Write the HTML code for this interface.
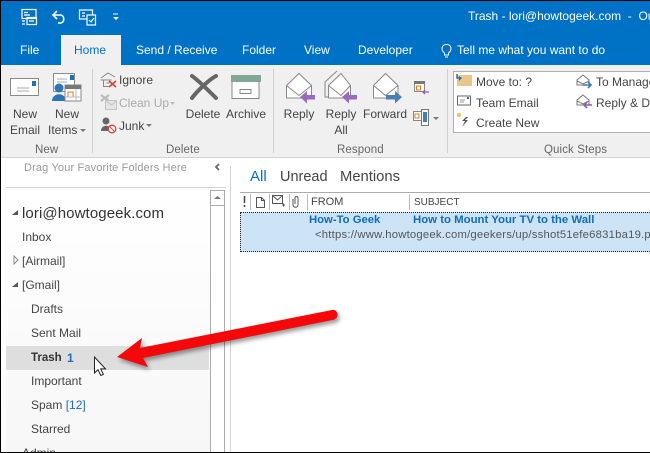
<!DOCTYPE html>
<html><head><meta charset="utf-8"><style>
html,body{margin:0;padding:0;background:#fff}
#p{position:relative;width:650px;height:453px;overflow:hidden;background:#fff;font-family:"Liberation Sans",sans-serif;color:#444}
.t{position:absolute;white-space:nowrap;line-height:16px;font-size:12px}
.w{color:#fff}.g{color:#666;font-size:11.5px;letter-spacing:.1px}.c{text-align:center;transform:translateX(-50%)}
.b{position:absolute}
svg{position:absolute;left:0;top:0}
</style></head><body><div id="p">
<div class="b" style="left:0;top:0;width:650px;height:65px;background:#0072c6"></div>
<div class="b" style="left:0;top:65px;width:650px;height:92px;background:#f0f0f0"></div>
<div class="b" style="left:0;top:157px;width:650px;height:1px;background:#d4d4d4"></div>
<div class="b" style="left:61px;top:35px;width:60px;height:30px;background:#f0f0f0"></div>
<div class="t w" style="left:468px;top:8px;">Trash - lori@howtogeek.com&nbsp; -&nbsp; Ou</div>
<div class="t w" style="left:20px;top:42px">File</div>
<div class="t" style="left:74px;top:42px;color:#0072c6">Home</div>
<div class="t w" style="left:136px;top:42px">Send / Receive</div>
<div class="t w" style="left:242px;top:42px">Folder</div>
<div class="t w" style="left:304px;top:42px">View</div>
<div class="t w" style="left:358px;top:42px">Developer</div>
<div class="t w" style="left:457px;top:42px">Tell me what you want to do</div>

<div class="t c" style="left:25px;top:106px">New</div><div class="t c" style="left:25px;top:122px">Email</div>
<div class="t c" style="left:67px;top:106px">New</div><div class="t" style="left:48px;top:122px">Items</div>
<div class="t g" style="left:35px;top:142px">New</div>
<div class="t" style="left:119px;top:72px">Ignore</div>
<div class="t" style="left:119px;top:95px;color:#aaa">Clean Up</div>
<div class="t" style="left:119px;top:118px">Junk</div>
<div class="t c" style="left:203px;top:106px">Delete</div>
<div class="t c" style="left:246px;top:106px">Archive</div>
<div class="t g" style="left:166px;top:142px">Delete</div>
<div class="t c" style="left:299px;top:106px">Reply</div>
<div class="t c" style="left:341px;top:106px">Reply</div><div class="t c" style="left:341px;top:122px">All</div>
<div class="t c" style="left:385px;top:106px">Forward</div>
<div class="t g" style="left:337px;top:142px">Respond</div>
<div class="t g" style="left:544px;top:142px">Quick Steps</div>

<div class="b" style="left:453px;top:71px;width:197px;height:62px;background:#fff;border:1px solid #b0b0b0;box-sizing:border-box;border-right:0"></div>
<div class="t" style="left:476px;top:74px">Move to: ?</div>
<div class="t" style="left:476px;top:95px">Team Email</div>
<div class="t" style="left:476px;top:115px">Create New</div>
<div class="t" style="left:596px;top:74px">To Manager</div>
<div class="t" style="left:596px;top:95px">Reply &amp; Delete</div>

<!-- sidebar -->
<div class="t" style="left:24px;top:160px;color:#999;font-size:11px;letter-spacing:.15px">Drag Your Favorite Folders Here</div>
<div class="b" style="left:6px;top:187px;width:220px;height:1px;background:#d4d4d4"></div>
<div class="b" style="left:6px;top:188px;width:204px;height:265px;background:linear-gradient(#fff,#f7f7f7)"></div>
<div class="b" style="left:210px;top:190px;width:1px;height:263px;background:#ababab"></div>
<div class="b" style="left:224px;top:190px;width:1px;height:263px;background:#ababab"></div>
<div class="b" style="left:211px;top:190px;width:13px;height:1px;background:#ababab"></div>
<div class="b" style="left:211px;top:205px;width:13px;height:1px;background:#ababab"></div>
<div class="b" style="left:230px;top:166px;width:1px;height:287px;background:#d4d4d4"></div>
<div class="t" style="left:22px;top:206px;font-size:15px;color:#333;letter-spacing:.1px">lori@howtogeek.com</div>
<div class="t" style="left:22px;top:229px">Inbox</div>
<div class="t" style="left:22px;top:253px">[Airmail]</div>
<div class="t" style="left:22px;top:277px">[Gmail]</div>
<div class="t" style="left:31px;top:301px">Drafts</div>
<div class="t" style="left:31px;top:325px">Sent Mail</div>
<div class="b" style="left:6px;top:346px;width:203px;height:24px;background:#dedede"></div>
<div class="t" style="left:31px;top:350px;font-weight:bold;color:#333;font-size:11.5px">Trash</div>
<div class="t" style="left:67px;top:350px;font-weight:bold;color:#1e6bb8">1</div>
<div class="t" style="left:31px;top:373px">Important</div>
<div class="t" style="left:31px;top:397px">Spam <span style="color:#1e6bb8">[12]</span></div>
<div class="t" style="left:31px;top:421px">Starred</div>
<div class="t" style="left:22px;top:445px">Admin</div>

<!-- list -->
<div class="t" style="left:250px;top:169px;font-size:15px;color:#0072c6">All</div>
<div class="t" style="left:280px;top:169px;font-size:14.5px;color:#444">Unread</div>
<div class="t" style="left:340px;top:169px;font-size:14.8px;color:#444">Mentions</div>
<div class="b" style="left:240px;top:192px;width:410px;height:1px;background:#ababab"></div>
<div class="t" style="left:311px;top:194px;font-size:11px">FROM</div>
<div class="t" style="left:414px;top:195px;font-size:10px">SUBJECT</div>
<div class="b" style="left:240px;top:212px;width:410px;height:40px;background:#cde4f7;border:1px dotted #222;box-sizing:border-box;border-right:0"></div>
<div class="t" style="left:309px;top:212px;font-size:11.3px;font-weight:bold;color:#0f6cbd">How-To Geek</div>
<div class="t" style="left:413px;top:212px;font-size:11.4px;font-weight:bold;color:#0f6cbd">How to Mount Your TV to the Wall</div>
<div class="t" style="left:315px;top:227px;font-size:11.3px;color:#555;letter-spacing:.21px">&lt;https://www.howtogeek.com/geekers/up/sshot51efe6831ba19.p</div>

<svg width="650" height="453" viewBox="0 0 650 453" fill="none">
<!-- black frame -->
<rect x="0" y="0" width="650" height="1" fill="#000"/><rect x="0" y="0" width="1" height="453" fill="#000"/><rect x="0" y="452" width="650" height="1" fill="#000"/>
<!-- QAT -->
<g stroke="#fff" stroke-width="1.2"><rect x="22" y="9.500" width="14" height="9"/><rect x="27" y="17.500" width="9.500" height="7"/><path d="M29 21h5M24 12.500h4M24 15h6M22 21h3M22 24h3"/></g>
<path d="M53 15h7c5 0 5 8 0 8h-2M57 11l-4 4 4 4" stroke="#fff" stroke-width="1.600"/>
<g stroke="#fff" stroke-width="1.2"><rect x="79.500" y="10" width="13" height="9"/><rect x="87" y="15" width="8.500" height="10" fill="#0072c6"/><path d="M89 20l2 2 3-4M82 13h3M82 16h3"/></g>
<path d="M113 14h5" stroke="#fff"/><path d="M113 17h6l-3 3z" fill="#fff"/>
<!-- bulb -->
<path d="M444.500 53c-4-3-3-8.500 2-8.500s6 5.500 2 8.500v2h-4zM445 57h3" stroke="#fff"/>
<!-- ribbon separators -->
<path d="M92.500 69v84M273.500 69v84M447.500 69v84" stroke="#d0d0d0"/>
<!-- new email -->
<rect x="10.500" y="78.500" width="28" height="17" fill="#fff" stroke="#8a8a8a"/><rect x="32" y="81" width="4" height="5" fill="#1b71b8"/><path d="M17 88h12M17 91h12" stroke="#aaa"/>
<!-- new items -->
<rect x="53.500" y="73.500" width="21" height="18" fill="#fff" stroke="#8a8a8a"/><rect x="70" y="75" width="4" height="5" fill="#1b71b8"/><path d="M57 79h10M57 82h10" stroke="#aaa"/>
<circle cx="59" cy="88" r="4.500" fill="#2a76bb"/><path d="M52 101c0-9 14-9 14 0z" fill="#2a76bb"/>
<rect x="65" y="85" width="16" height="16" fill="#fff" stroke="#888"/><rect x="65" y="85" width="16" height="4" fill="#777"/><rect x="68" y="92" width="5" height="5" fill="#fff" stroke="#e47c22"/><path d="M76 89v12M65 97h16" stroke="#bbb"/>
<path d="M80 129h6l-3 3z" fill="#777"/>
<!-- ignore -->
<path d="M101 78l7-5 7 4M100.500 80h11M103.500 80.500v6h5M106.500 83h3" stroke="#888"/><path d="M109 81l7 6M116 81l-7 6" stroke="#d9432f" stroke-width="1.700"/>
<!-- clean up -->
<path d="M101 95l8 6M109 95l-8 6" stroke="#bbb" stroke-width="2.200"/><rect x="105.500" y="100.500" width="11" height="9" stroke="#c4c4c4" fill="#e4e4e4"/><path d="M106 101l5.500 4 5-4" stroke="#c4c4c4"/><path d="M170 102h5l-2.500 3z" fill="#bbb"/>
<!-- junk -->
<circle cx="106" cy="121" r="3.500" fill="#666"/><path d="M101 131c0-7 10-7 10 0z" fill="#666"/><circle cx="112" cy="129" r="3.800" fill="#fff" stroke="#d9432f" stroke-width="1.300"/><path d="M109.500 126.500l5 5" stroke="#d9432f"/>
<path d="M146 124h6l-3 3z" fill="#777"/>
<!-- delete X -->
<path d="M192 76c6 4 18 16 24 22M216 76c-6 3-18 14-24 22" stroke="#666" stroke-width="4" stroke-linecap="round"/>
<!-- archive -->
<rect x="232" y="81.500" width="27" height="17" fill="#fff" stroke="#888"/><rect x="231" y="75" width="30" height="7" fill="#7fa896"/><rect x="240" y="89.500" width="11" height="4" stroke="#888"/>
<!-- reply -->
<g stroke="#888" fill="#fff"><path d="M286.500 85.500l12.500-12 12.500 12v12.500h-25z"/><path d="M286.500 85.500l12.500 10 12.500-10"/></g>
<path d="M300 97l7-6v4h8v4.500h-8v4z" fill="#9a6bbd"/>
<path d="M337 71l-12 11v15h4" stroke="#888"/>
<g stroke="#888" fill="#fff"><path d="M328.500 85.500l12.500-12 9.500 12v12.500h-22z"/><path d="M328.500 85.500l12.500 10 9.500-10"/></g>
<path d="M342 97l7-6v4h8v4.500h-8v4z" fill="#9a6bbd"/>
<g stroke="#888" fill="#fff"><path d="M373.500 85.500l12-12 12.500 12v12.500h-24.500z"/><path d="M373.500 85.500l12 10 12.500-10"/></g>
<path d="M402 97l-7-6v4h-9v4.500h9v4z" fill="#4a7eb5"/>
<!-- small respond icons -->
<rect x="414.500" y="81.500" width="10" height="10" fill="#fff" stroke="#888"/><rect x="414" y="81" width="11" height="3" fill="#777"/><rect x="416.500" y="86" width="4" height="4" stroke="#e47c22"/><path d="M423 92h6M425 90l-2 2 2 2" stroke="#8a5fb0" stroke-width="1.300"/>
<rect x="413.500" y="111.500" width="9" height="9" stroke="#888" fill="#fff"/><rect x="415" y="114" width="4" height="4" stroke="#e47c22"/><rect x="421.500" y="109.500" width="7" height="16" fill="#fff" stroke="#777"/><rect x="423" y="112" width="4" height="10" fill="#3f7fc1"/><path d="M433 117h6l-3 3z" fill="#777"/>
<!-- quick steps icons -->
<path d="M457 75h6l1 0h8v11h-15z" fill="#e8c88a"/><path d="M457 74v4h3" stroke="#2b6cb0" stroke-width="1.500"/><path d="M459 81l3-3-3-2z" fill="#2b6cb0"/>
<rect x="457.500" y="96" width="13" height="9" stroke="#666" fill="#fff"/><path d="M460 100h5M460 102h4" stroke="#999"/><rect x="467" y="97" width="2" height="2" fill="#2b6cb0"/>
<path d="M466 117l-4 4h3l-3 6 6-7h-3l3-3z" fill="#555"/><circle cx="459" cy="115" r="2" fill="#f2c14e"/>
<path d="M577 80l6-5 6 5v5h-12zM577 81l6 3 6-3" stroke="#777" fill="#fff"/><path d="M583 85h8M588 82l3 3-3 3" stroke="#3d78b5" stroke-width="1.600"/>
<path d="M577 100l6-5 6 5v5h-12zM577 101l6 3 6-3" stroke="#777" fill="#fff"/><path d="M592 105h-8M587 102l-3 3 3 3" stroke="#8a5fb0" stroke-width="1.600"/>
<!-- sidebar chevron -->
<path d="M219 164l-3 3 3 3" stroke="#666" stroke-width="1.800"/>
<path d="M214 199l3.500-3 3.500 3z" fill="#777"/>
<path d="M12 215l6-5v5z" fill="#555"/><path d="M14 256v8l4-4z" stroke="#888" fill="#fff"/><path d="M12 287l6-5v5z" fill="#555"/>
<!-- table header icons -->
<path d="M244.500 196v7M244.500 205v2" stroke="#444" stroke-width="1.500"/>
<path d="M250.500 194v16M269.500 194v16M289.500 194v16M307.500 194v16M409.500 194v16" stroke="#bbb"/>
<path d="M256.500 197.500h5l3 3v7h-8z M261.500 197.500v3h3" stroke="#555"/>
<path d="M272.500 195.500h10v8h-10zM272.500 195.500l5 4.500 5-4.500M282 205h3M283.500 203.500v3" stroke="#555"/>
<path d="M293 199v6c0 3 5 3 5 0v-7c0-2-3-2-3 0v6" stroke="#555"/>
<!-- arrow -->
<g style="filter:drop-shadow(2px 3px 2px rgba(0,0,0,.4))">
<path d="M332 310c3.500-.6 5.500 2 5.500 5 0 2.500-2 4.300-4.500 4.900L143 358l5 9-31-10 25-19-2 10z" fill="#f5080a"/>
</g>
<!-- cursor -->
<path d="M94.500 357v16l3.500-3.300 2.800 5.800 2.600-1.100-2.700-5.500h4.800z" fill="#fff" stroke="#222"/>
</svg>
</div></body></html>
